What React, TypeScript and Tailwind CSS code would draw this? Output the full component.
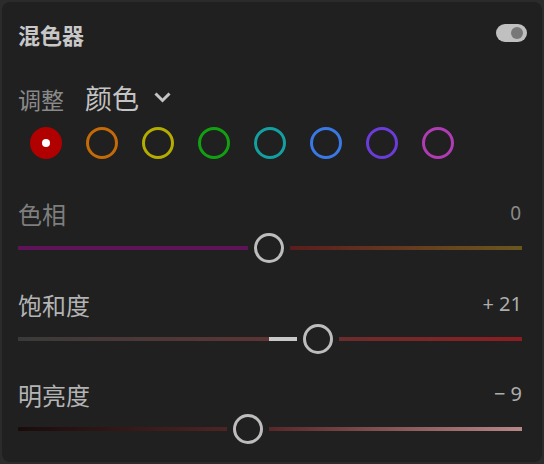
import React from "react";

const font = { fontFamily: '"Noto Sans", "Noto Sans CJK SC", sans-serif' };

function Swatch({ color, active }: { color: string; active?: boolean }) {
  if (active) {
    return (
      <div
        className="w-[32px] h-[32px] rounded-full flex items-center justify-center"
        style={{ backgroundColor: color }}
      >
        <div className="w-[8px] h-[8px] rounded-full bg-white" />
      </div>
    );
  }
  return (
    <div
      className="w-[32px] h-[32px] rounded-full border-[3px] box-border"
      style={{ borderColor: color }}
    />
  );
}

function Thumb() {
  return <div className="w-[30px] h-[30px] rounded-full border-[3px] border-[#bdbdbd] shrink-0 mx-[6px] box-border" />;
}

export default function App() {
  const swatches = ["#b00000", "#c46a08", "#b4ac00", "#12a012", "#14a0a0", "#3a78e4", "#6c3cd8", "#b03cb4"];
  return (
    <div className="w-[544px] h-[464px] bg-[#2b2b2b] p-[2px]" style={font}>
      <div className="w-[540px] h-[460px] bg-[#202020] rounded-[8px] pl-[16px] pr-[20px] pt-[17px]">
        {/* Title row */}
        <div className="flex justify-between items-start h-[32px]">
          <div className="text-[22px] leading-[32px] font-bold text-[#c8c8c8]">混色器</div>
          <div className="mt-[5px] mr-[-5px] w-[31px] h-[18px] rounded-full bg-[#c0c0c0] flex items-center justify-end pr-[4px]">
            <div className="w-[12px] h-[12px] rounded-full bg-[#787878]" />
          </div>
        </div>

        {/* Adjust row */}
        <div className="flex items-baseline mt-[30px] h-[36px]">
          <div className="text-[23px] leading-[36px] text-[#8a8a8a]">调整</div>
          <div className="text-[27px] leading-[36px] text-[#c4c4c4] ml-[21px]">颜色</div>
          <svg className="ml-[15px] self-center mt-[-3px]" width="17" height="11" viewBox="0 0 17 11">
            <path d="M1.5 1.5 L8.5 8.5 L15.5 1.5" fill="none" stroke="#c4c4c4" strokeWidth="3" />
          </svg>
        </div>

        {/* Swatches */}
        <div className="flex gap-[24px] ml-[12px] mt-[10px]">
          {swatches.map((c, i) => (
            <Swatch key={i} color={c} active={i === 0} />
          ))}
        </div>

        {/* Hue */}
        <div className="mt-[41px]">
          <div className="flex justify-between items-start h-[33px]">
            <div className="text-[24px] leading-[30px] text-[#7e7e7e]">色相</div>
            <div className="text-[19px] leading-[26px] text-[#8a8a8a] mr-[1px]">0</div>
          </div>
          <div className="flex items-center h-[30px]">
            <div className="w-[230px] h-[4px] bg-[#5e1258]" />
            <Thumb />
            <div className="flex-1 h-[4px] bg-gradient-to-r from-[#5a1c1c] to-[#6b561e]" />
          </div>
        </div>

        {/* Saturation */}
        <div className="mt-[28px]">
          <div className="flex justify-between items-start h-[33px]">
            <div className="text-[24px] leading-[30px] text-[#b4b4b4]">饱和度</div>
            <div className="text-[20px] leading-[26px] text-[#adadad]">+ 21</div>
          </div>
          <div className="flex items-center h-[30px]">
            <div className="w-[251px] h-[4px] bg-gradient-to-r from-[#3a3a3a] to-[#5c3434]" />
            <div className="w-[28px] h-[4px] bg-[#c8c8c8]" />
            <Thumb />
            <div className="flex-1 h-[4px] bg-gradient-to-r from-[#6a2c2c] to-[#8c1c22]" />
          </div>
        </div>

        {/* Brightness */}
        <div className="mt-[27px]">
          <div className="flex justify-between items-start h-[33px]">
            <div className="text-[24px] leading-[30px] text-[#b4b4b4]">明亮度</div>
            <div className="text-[20px] leading-[26px] text-[#adadad]">− 9</div>
          </div>
          <div className="flex items-center h-[30px]">
            <div className="w-[209px] h-[4px] bg-gradient-to-r from-[#1a0c0c] to-[#4e2424]" />
            <Thumb />
            <div className="flex-1 h-[4px] bg-gradient-to-r from-[#582828] to-[#b88888]" />
          </div>
        </div>
      </div>
    </div>
  );
}
